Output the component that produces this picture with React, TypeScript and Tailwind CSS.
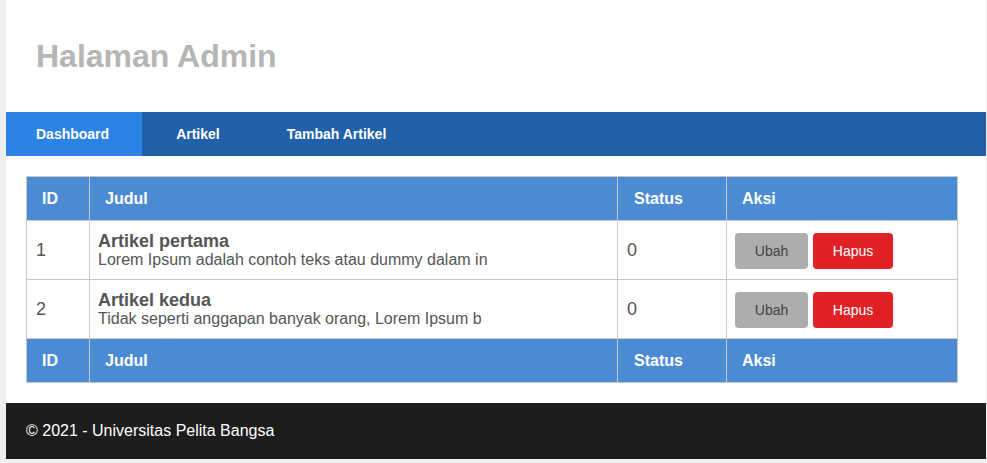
const rows = [
  {
    id: 1,
    judul: "Artikel pertama",
    isi: "Lorem Ipsum adalah contoh teks atau dummy dalam in",
    status: 0,
  },
  {
    id: 2,
    judul: "Artikel kedua",
    isi: "Tidak seperti anggapan banyak orang, Lorem Ipsum b",
    status: 0,
  },
];

const HeadRow = () => (
  <tr className="h-[44px] bg-[#4b8bd4] text-left text-[16px] font-bold text-white">
    <th className="border border-[#c8c8c8] px-[15px]">ID</th>
    <th className="border border-[#c8c8c8] px-[15px]">Judul</th>
    <th className="border border-[#c8c8c8] px-[16px]">Status</th>
    <th className="border border-[#c8c8c8] px-[15px]">Aksi</th>
  </tr>
);

export default function App() {
  return (
    <div
      className="min-h-[463px] bg-[#efefef]"
      style={{ fontFamily: '"Liberation Sans", Arial, sans-serif' }}
    >
      <div className="ml-[6px] w-[980px] bg-white">
        {/* Header */}
        <header className="flex h-[112px] items-center px-[30px]">
          <h1 className="text-[32px] font-bold text-[#b5b5b5]">
            Halaman Admin
          </h1>
        </header>

        {/* Nav */}
        <nav className="flex h-[44px] gap-[4px] bg-[#2161aa]">
          <a className="flex items-center bg-[#2b83e6] pl-[30px] pr-[33px] text-[14px] font-bold text-white">
            Dashboard
          </a>
          <a className="flex items-center pl-[30px] pr-[33px] text-[14px] font-bold text-white">
            Artikel
          </a>
          <a className="flex items-center pl-[30px] pr-[33px] text-[14px] font-bold text-white">
            Tambah Artikel
          </a>
        </nav>

        {/* Content */}
        <section className="p-[20px]">
          <table className="w-[931px] table-fixed border-collapse border border-[#c8c8c8]">
            <colgroup>
              <col className="w-[63px]" />
              <col className="w-[528px]" />
              <col className="w-[109px]" />
              <col className="w-[231px]" />
            </colgroup>
            <thead>
              <HeadRow />
            </thead>
            <tbody className="text-[#555]">
              {rows.map((r) => (
                <tr key={r.id} className="h-[59px]">
                  <td className="border border-[#c8c8c8] px-[9px] text-[18px]">
                    {r.id}
                  </td>
                  <td className="border border-[#c8c8c8] px-[8px] py-[10px]">
                    <h3 className="text-[18px] font-bold leading-[20px]">
                      {r.judul}
                    </h3>
                    <p className="text-[16px] leading-[18px]">{r.isi}</p>
                  </td>
                  <td className="border border-[#c8c8c8] px-[9px] text-[18px]">
                    {r.status}
                  </td>
                  <td className="border border-[#c8c8c8] px-[8px] pt-[2px]">
                    <div className="flex gap-[5px]">
                      <button className="h-[36px] w-[73px] rounded-[4px] bg-[#adadad] text-[14px] text-[#444]">
                        Ubah
                      </button>
                      <button className="h-[36px] w-[80px] rounded-[4px] bg-[#e02126] text-[14px] text-white">
                        Hapus
                      </button>
                    </div>
                  </td>
                </tr>
              ))}
            </tbody>
            <tfoot>
              <HeadRow />
            </tfoot>
          </table>
        </section>

        {/* Footer */}
        <footer className="flex h-[56px] items-center bg-[#1d1d1d] px-[20px] text-[16px] text-white">
          © 2021 - Universitas Pelita Bangsa
        </footer>
      </div>
    </div>
  );
}
